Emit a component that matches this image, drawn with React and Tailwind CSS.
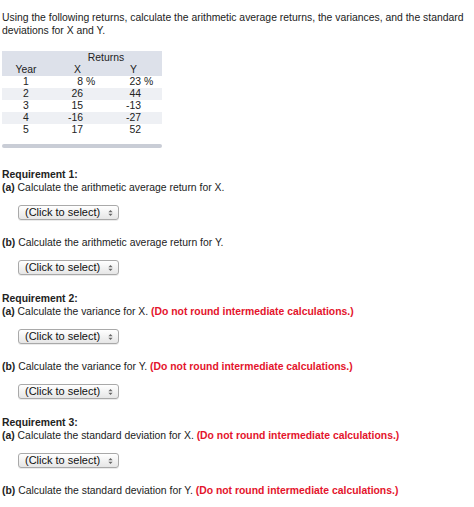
const ROWS = [
  { year: 1, x: '8', y: '23', pct: true },
  { year: 2, x: '26', y: '44' },
  { year: 3, x: '15', y: '-13' },
  { year: 4, x: '-16', y: '-27' },
  { year: 5, x: '17', y: '52' },
]

const NOTE = '(Do not round intermediate calculations.)'

function Select() {
  return (
    <div className="ml-[16px] mt-[11px] flex h-[15px] w-[101px] items-center rounded-[3px] border border-[#a9a9a9] bg-gradient-to-b from-white to-[#e6e6e6] pl-[6px] pr-[5px] text-[11px] leading-[13px] text-[#111] shadow-[0_1px_0_rgba(0,0,0,0.08)]">
      <span className="flex-1">(Click to select)</span>
      <svg width="5" height="8" viewBox="0 0 6 9" className="text-[#666]">
        <path d="M0.5 3.5 L3 0.8 L5.5 3.5 Z" fill="currentColor" />
        <path d="M0.5 5.5 L3 8.2 L5.5 5.5 Z" fill="currentColor" />
      </svg>
    </div>
  )
}

function Question({ tag, text, note, first }) {
  return (
    <p className={first ? '' : 'mt-[16px]'}>
      <b>{tag}</b> {text}
      {note && <b className="text-[#e4142c]"> {NOTE}</b>}
    </p>
  )
}

function Requirement({ n, a, b, note }) {
  return (
    <div className="mt-[17px] first:mt-0">
      <p className="font-bold">Requirement {n}:</p>
      <Question tag="(a)" text={a} note={note} first />
      <Select />
      <Question tag="(b)" text={b} note={note} />
      <Select />
    </div>
  )
}

export default function App() {
  return (
    <div className="min-h-[507px] bg-white px-[2px] pt-[11px] text-[10.4px] leading-[13px] text-[#222]" style={{ fontFamily: '"Liberation Sans", Arial, sans-serif' }}>
      <p>
        Using the following returns, calculate the arithmetic average returns, the variances, and the standard deviations for X and Y.
      </p>

      <div className="mt-[14px] w-[160px] leading-[12px]">
        <div className="bg-[#dde1ea] pt-[1px]">
          <div className="flex h-[12px]">
            <div className="w-[48px]" />
            <div className="flex-1 text-center">Returns</div>
          </div>
          <div className="flex h-[12px]">
            <div className="w-[48px] text-center">Year</div>
            <div className="w-[55px] text-center">X</div>
            <div className="flex-1 text-center">Y</div>
          </div>
        </div>
        {ROWS.map((r, i) => (
          <div key={r.year} className={`flex h-[12px] ${i % 2 ? 'bg-[#eef0f4]' : 'bg-white'}`}>
            <div className="w-[48px] text-center">{r.year}</div>
            <div className="flex w-[55px]">
              <span className="w-[33px] text-right">{r.x}</span>
              <span className="pl-[3px]">{r.pct ? '%' : ''}</span>
            </div>
            <div className="flex flex-1">
              <span className="w-[36px] text-right">{r.y}</span>
              <span className="pl-[3px]">{r.pct ? '%' : ''}</span>
            </div>
          </div>
        ))}
        <div className="mt-[8px] h-[4px] rounded-full bg-[#c9cdd6]" />
      </div>

      <div className="mt-[20px]">
        <Requirement
          n={1}
          a="Calculate the arithmetic average return for X."
          b="Calculate the arithmetic average return for Y."
        />
        <Requirement
          n={2}
          a="Calculate the variance for X."
          b="Calculate the variance for Y."
          note
        />
        <Requirement
          n={3}
          a="Calculate the standard deviation for X."
          b="Calculate the standard deviation for Y."
          note
        />
      </div>
    </div>
  )
}
